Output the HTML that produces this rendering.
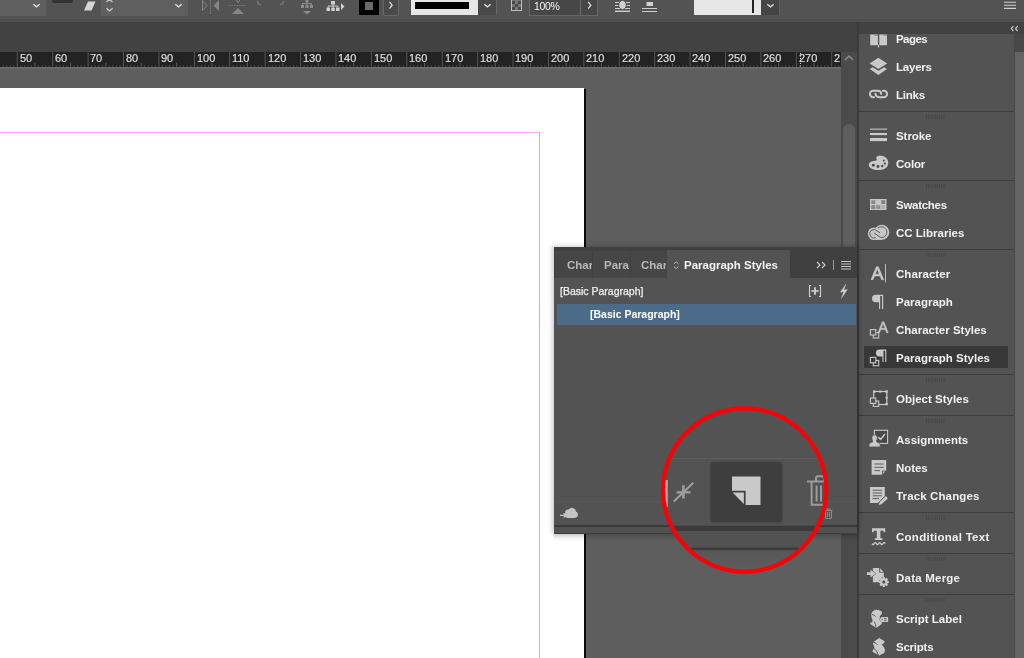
<!DOCTYPE html><html><head><meta charset="utf-8"><title>InDesign</title><style>
html,body{margin:0;padding:0;}
body{width:1024px;height:658px;overflow:hidden;background:#5e5e5e;position:relative;font-family:"Liberation Sans",sans-serif;}
.a{position:absolute;}
.lbl,.rt,.tx{will-change:transform;}
.lbl{position:absolute;left:896.3px;color:#f0f0f0;font-weight:700;font-size:11.5px;line-height:14px;white-space:nowrap;}
.rt{position:absolute;top:54px;color:#dedede;font-size:11px;line-height:9px;white-space:nowrap;letter-spacing:-0.05px;-webkit-text-stroke:0.2px #dedede}
svg{position:absolute;overflow:visible;}
</style></head><body>
<div class="a" style="left:0;top:88px;width:584px;height:570px;background:#fff"></div>
<div class="a" style="left:584px;top:89px;width:1.6px;height:569px;background:#0a0a0a"></div>
<div class="a" style="left:0;top:132px;width:540px;height:1.2px;background:#ffa6ff"></div>
<div class="a" style="left:538.6px;top:132px;width:1.4px;height:526px;background:#cfa0ff"></div>
<div class="a" style="left:0;top:0;width:1024px;height:22px;background:#535353"></div>
<div class="a" style="left:0;top:19px;width:1024px;height:3px;background:#4e4e4e"></div>
<div class="a" style="left:0;top:22px;width:859px;height:30px;background:#424242"></div>
<div class="a" style="left:0;top:0;width:46px;height:16px;background:#5f5f5f"></div>
<div class="a" style="left:101px;top:0;width:87px;height:16px;background:#5f5f5f"></div>
<div class="a" style="left:52px;top:0;width:21px;height:3px;background:#333;border-radius:0 0 2px 2px"></div>
<svg style="left:0;top:0" width="1" height="1"><path d="M33.3 4.2 L36.5 6.8 L39.7 4.2" fill="none" stroke="#e0e0e0" stroke-width="1.3"/></svg>
<svg style="left:0;top:0" width="1" height="1"><path d="M175.3 4.2 L178.5 6.8 L181.7 4.2" fill="none" stroke="#e0e0e0" stroke-width="1.3"/></svg>
<svg style="left:0;top:0" width="1" height="1"><path d="M106.3 8.2 L109.5 10.8 L112.7 8.2" fill="none" stroke="#c8c8c8" stroke-width="1.3"/></svg>
<svg style="left:0;top:0" width="1" height="1"><path d="M106.5 2 L109.5 -0.6 L112.5 2" fill="none" stroke="#c8c8c8" stroke-width="1.3"/></svg>
<svg style="left:0;top:0" width="1" height="1"><path d="M88 1.5 L95.5 1.5 L91.5 10.5 L84 10.5 Z" fill="#d6d6d6"/></svg>
<svg style="left:0;top:0" width="1" height="1"><path d="M202.5 0.5 L207 5.5 L202.5 10.5 Z" fill="none" stroke="#858585" stroke-width="1"/><path d="M219 0 L213.5 5.5 L219 11 Z" fill="#858585"/><path d="M210.5 0 V14" stroke="#7a7a7a" stroke-width="1" stroke-dasharray="1.5 1"/></svg>
<svg style="left:0;top:0" width="1" height="1"><path d="M229 5.5 H246" stroke="#7a7a7a" stroke-width="1" stroke-dasharray="1.5 1"/><path d="M238 8 L244 14 L232 14 Z" fill="#858585"/><path d="M235.5 -1 L238 2.5 L240.5 -1" fill="none" stroke="#858585" stroke-width="1"/></svg>
<svg style="left:0;top:0" width="1" height="1"><path d="M257.5 1 Q257.5 4.5 261 4.5" fill="none" stroke="#777" stroke-width="1.4"/><path d="M283.5 1 Q283.5 4.5 280 4.5" fill="none" stroke="#777" stroke-width="1.4"/></svg>
<svg style="left:0;top:0" width="1" height="1"><g fill="#8c8c8c"><rect x="305.5" y="0" width="3" height="2"/><rect x="301" y="5" width="3" height="3"/><rect x="305.5" y="5" width="3" height="3"/><rect x="310" y="5" width="3" height="3"/><path d="M303 11 L311 11 L307 14.5 Z"/></g><path d="M302.5 5 V3.5 H311.5 V5 M307 2 V5" fill="none" stroke="#8c8c8c" stroke-width="1"/></svg>
<svg style="left:0;top:0" width="1" height="1"><g fill="#cfcfcf"><rect x="331" y="1" width="4" height="3.5"/><rect x="326.5" y="7.5" width="3.5" height="3.5"/><rect x="331.3" y="7.5" width="3.5" height="3.5"/><rect x="336" y="7.5" width="3.5" height="3.5"/><path d="M341 3 L344.5 6.5 L341 10 Z"/></g><path d="M328.2 7.5 V6 H337.8 V7.5 M333 4.5 V7.5" fill="none" stroke="#cfcfcf" stroke-width="1"/></svg>
<div class="a" style="left:359px;top:0;width:20px;height:15px;background:#000"></div>
<div class="a" style="left:365px;top:2px;width:8px;height:8px;background:#6a6a6a"></div>
<div class="a" style="left:383px;top:-2px;width:16px;height:18px;border:1px solid #686868;background:#4a4a4a;box-sizing:border-box;border-radius:2px"></div>
<svg style="left:0;top:0" width="1" height="1"><path d="M389.5 1.8000000000000003 L392.1 5.2 L389.5 8.6" fill="none" stroke="#e0e0e0" stroke-width="1.3"/></svg>
<div class="a" style="left:411px;top:0;width:67px;height:15px;background:#e6e6e6"></div>
<div class="a" style="left:415px;top:2px;width:54px;height:7px;background:#000"></div>
<div class="a" style="left:478px;top:0;width:18px;height:15px;background:#484848;border-right:1px solid #666"></div>
<svg style="left:0;top:0" width="1" height="1"><path d="M484.3 4.2 L487.5 6.8 L490.7 4.2" fill="none" stroke="#e0e0e0" stroke-width="1.3"/></svg>
<svg style="left:0;top:0" width="1" height="1"><rect x="511.5" y="-1" width="10" height="11.5" fill="#777" stroke="#bdbdbd" stroke-width="1"/><g fill="#4a4a4a"><rect x="512" y="1" width="3" height="3"/><rect x="518" y="1" width="3" height="3"/><rect x="515" y="4" width="3" height="3"/><rect x="512" y="7" width="3" height="3"/><rect x="518" y="7" width="3" height="3"/></g></svg>
<div class="a" style="left:529px;top:-1px;width:69px;height:17px;border:1px solid #676767;background:#474747;box-sizing:border-box"></div>
<div class="a" style="left:580px;top:0;width:1px;height:15px;background:#6c6c6c"></div>
<div class="a tx" style="left:533.5px;top:1px;color:#f2f2f2;font-size:10.5px;line-height:11px;letter-spacing:-0.3px">100%</div>
<svg style="left:0;top:0" width="1" height="1"><path d="M588.2 1.8000000000000003 L590.8 5.2 L588.2 8.6" fill="none" stroke="#e0e0e0" stroke-width="1.3"/></svg>
<svg style="left:0;top:0" width="1" height="1"><g stroke="#cfcfcf" stroke-width="1"><path d="M615 2.5 H630 M615 5.5 H630 M615 8.5 H630"/><path d="M615 11.3 H630" stroke-width="1.4"/></g><ellipse cx="622.5" cy="5" rx="3.8" ry="4.6" fill="#cfcfcf" stroke="#535353" stroke-width="1"/></svg>
<svg style="left:0;top:0" width="1" height="1"><rect x="646.5" y="2" width="6.5" height="4" fill="#cfcfcf"/><path d="M642 8.5 H657 M642 11.5 H657" stroke="#cfcfcf" stroke-width="1.2"/></svg>
<div class="a" style="left:694px;top:0;width:67px;height:15px;background:#e6e6e6"></div>
<div class="a" style="left:752px;top:0;width:2px;height:13px;background:#222"></div>
<div class="a" style="left:761px;top:0;width:18px;height:15px;background:#454545;border-right:1px solid #5e5e5e"></div>
<svg style="left:0;top:0" width="1" height="1"><path d="M767.3 4.2 L770.5 6.8 L773.7 4.2" fill="none" stroke="#e0e0e0" stroke-width="1.3"/></svg>
<svg style="left:0;top:0" width="1" height="1"><path d="M1004 2.2 H1016 M1004 5.3 H1016 M1004 8.4 H1016" stroke="#d0d0d0" stroke-width="1.1"/></svg>
<div class="a" style="left:0;top:52px;width:841px;height:15px;background:#232323"></div>
<div class="a" style="left:0;top:67px;width:841px;height:1.5px;background:#696969"></div>
<svg style="left:0;top:0" width="1" height="1"><path d="M3.14 65.3 V67" stroke="#505050" stroke-width="1"/><path d="M6.68 65.3 V67" stroke="#505050" stroke-width="1"/><path d="M10.22 65.3 V67" stroke="#505050" stroke-width="1"/><path d="M13.76 65.3 V67" stroke="#505050" stroke-width="1"/><path d="M17.30 52 V67" stroke="#555" stroke-width="1"/><path d="M20.84 65.3 V67" stroke="#505050" stroke-width="1"/><path d="M24.38 65.3 V67" stroke="#505050" stroke-width="1"/><path d="M27.92 65.3 V67" stroke="#505050" stroke-width="1"/><path d="M31.46 65.3 V67" stroke="#505050" stroke-width="1"/><path d="M35.00 62.7 V67" stroke="#5c5c5c" stroke-width="1"/><path d="M38.55 65.3 V67" stroke="#505050" stroke-width="1"/><path d="M42.09 65.3 V67" stroke="#505050" stroke-width="1"/><path d="M45.63 65.3 V67" stroke="#505050" stroke-width="1"/><path d="M49.17 65.3 V67" stroke="#505050" stroke-width="1"/><path d="M52.71 52 V67" stroke="#555" stroke-width="1"/><path d="M56.25 65.3 V67" stroke="#505050" stroke-width="1"/><path d="M59.79 65.3 V67" stroke="#505050" stroke-width="1"/><path d="M63.33 65.3 V67" stroke="#505050" stroke-width="1"/><path d="M66.87 65.3 V67" stroke="#505050" stroke-width="1"/><path d="M70.41 62.7 V67" stroke="#5c5c5c" stroke-width="1"/><path d="M73.96 65.3 V67" stroke="#505050" stroke-width="1"/><path d="M77.50 65.3 V67" stroke="#505050" stroke-width="1"/><path d="M81.04 65.3 V67" stroke="#505050" stroke-width="1"/><path d="M84.58 65.3 V67" stroke="#505050" stroke-width="1"/><path d="M88.12 52 V67" stroke="#555" stroke-width="1"/><path d="M91.66 65.3 V67" stroke="#505050" stroke-width="1"/><path d="M95.20 65.3 V67" stroke="#505050" stroke-width="1"/><path d="M98.74 65.3 V67" stroke="#505050" stroke-width="1"/><path d="M102.28 65.3 V67" stroke="#505050" stroke-width="1"/><path d="M105.82 62.7 V67" stroke="#5c5c5c" stroke-width="1"/><path d="M109.37 65.3 V67" stroke="#505050" stroke-width="1"/><path d="M112.91 65.3 V67" stroke="#505050" stroke-width="1"/><path d="M116.45 65.3 V67" stroke="#505050" stroke-width="1"/><path d="M119.99 65.3 V67" stroke="#505050" stroke-width="1"/><path d="M123.53 52 V67" stroke="#555" stroke-width="1"/><path d="M127.07 65.3 V67" stroke="#505050" stroke-width="1"/><path d="M130.61 65.3 V67" stroke="#505050" stroke-width="1"/><path d="M134.15 65.3 V67" stroke="#505050" stroke-width="1"/><path d="M137.69 65.3 V67" stroke="#505050" stroke-width="1"/><path d="M141.23 62.7 V67" stroke="#5c5c5c" stroke-width="1"/><path d="M144.78 65.3 V67" stroke="#505050" stroke-width="1"/><path d="M148.32 65.3 V67" stroke="#505050" stroke-width="1"/><path d="M151.86 65.3 V67" stroke="#505050" stroke-width="1"/><path d="M155.40 65.3 V67" stroke="#505050" stroke-width="1"/><path d="M158.94 52 V67" stroke="#555" stroke-width="1"/><path d="M162.48 65.3 V67" stroke="#505050" stroke-width="1"/><path d="M166.02 65.3 V67" stroke="#505050" stroke-width="1"/><path d="M169.56 65.3 V67" stroke="#505050" stroke-width="1"/><path d="M173.10 65.3 V67" stroke="#505050" stroke-width="1"/><path d="M176.64 62.7 V67" stroke="#5c5c5c" stroke-width="1"/><path d="M180.19 65.3 V67" stroke="#505050" stroke-width="1"/><path d="M183.73 65.3 V67" stroke="#505050" stroke-width="1"/><path d="M187.27 65.3 V67" stroke="#505050" stroke-width="1"/><path d="M190.81 65.3 V67" stroke="#505050" stroke-width="1"/><path d="M194.35 52 V67" stroke="#555" stroke-width="1"/><path d="M197.89 65.3 V67" stroke="#505050" stroke-width="1"/><path d="M201.43 65.3 V67" stroke="#505050" stroke-width="1"/><path d="M204.97 65.3 V67" stroke="#505050" stroke-width="1"/><path d="M208.51 65.3 V67" stroke="#505050" stroke-width="1"/><path d="M212.05 62.7 V67" stroke="#5c5c5c" stroke-width="1"/><path d="M215.60 65.3 V67" stroke="#505050" stroke-width="1"/><path d="M219.14 65.3 V67" stroke="#505050" stroke-width="1"/><path d="M222.68 65.3 V67" stroke="#505050" stroke-width="1"/><path d="M226.22 65.3 V67" stroke="#505050" stroke-width="1"/><path d="M229.76 52 V67" stroke="#555" stroke-width="1"/><path d="M233.30 65.3 V67" stroke="#505050" stroke-width="1"/><path d="M236.84 65.3 V67" stroke="#505050" stroke-width="1"/><path d="M240.38 65.3 V67" stroke="#505050" stroke-width="1"/><path d="M243.92 65.3 V67" stroke="#505050" stroke-width="1"/><path d="M247.46 62.7 V67" stroke="#5c5c5c" stroke-width="1"/><path d="M251.01 65.3 V67" stroke="#505050" stroke-width="1"/><path d="M254.55 65.3 V67" stroke="#505050" stroke-width="1"/><path d="M258.09 65.3 V67" stroke="#505050" stroke-width="1"/><path d="M261.63 65.3 V67" stroke="#505050" stroke-width="1"/><path d="M265.17 52 V67" stroke="#555" stroke-width="1"/><path d="M268.71 65.3 V67" stroke="#505050" stroke-width="1"/><path d="M272.25 65.3 V67" stroke="#505050" stroke-width="1"/><path d="M275.79 65.3 V67" stroke="#505050" stroke-width="1"/><path d="M279.33 65.3 V67" stroke="#505050" stroke-width="1"/><path d="M282.87 62.7 V67" stroke="#5c5c5c" stroke-width="1"/><path d="M286.42 65.3 V67" stroke="#505050" stroke-width="1"/><path d="M289.96 65.3 V67" stroke="#505050" stroke-width="1"/><path d="M293.50 65.3 V67" stroke="#505050" stroke-width="1"/><path d="M297.04 65.3 V67" stroke="#505050" stroke-width="1"/><path d="M300.58 52 V67" stroke="#555" stroke-width="1"/><path d="M304.12 65.3 V67" stroke="#505050" stroke-width="1"/><path d="M307.66 65.3 V67" stroke="#505050" stroke-width="1"/><path d="M311.20 65.3 V67" stroke="#505050" stroke-width="1"/><path d="M314.74 65.3 V67" stroke="#505050" stroke-width="1"/><path d="M318.29 62.7 V67" stroke="#5c5c5c" stroke-width="1"/><path d="M321.83 65.3 V67" stroke="#505050" stroke-width="1"/><path d="M325.37 65.3 V67" stroke="#505050" stroke-width="1"/><path d="M328.91 65.3 V67" stroke="#505050" stroke-width="1"/><path d="M332.45 65.3 V67" stroke="#505050" stroke-width="1"/><path d="M335.99 52 V67" stroke="#555" stroke-width="1"/><path d="M339.53 65.3 V67" stroke="#505050" stroke-width="1"/><path d="M343.07 65.3 V67" stroke="#505050" stroke-width="1"/><path d="M346.61 65.3 V67" stroke="#505050" stroke-width="1"/><path d="M350.15 65.3 V67" stroke="#505050" stroke-width="1"/><path d="M353.69 62.7 V67" stroke="#5c5c5c" stroke-width="1"/><path d="M357.24 65.3 V67" stroke="#505050" stroke-width="1"/><path d="M360.78 65.3 V67" stroke="#505050" stroke-width="1"/><path d="M364.32 65.3 V67" stroke="#505050" stroke-width="1"/><path d="M367.86 65.3 V67" stroke="#505050" stroke-width="1"/><path d="M371.40 52 V67" stroke="#555" stroke-width="1"/><path d="M374.94 65.3 V67" stroke="#505050" stroke-width="1"/><path d="M378.48 65.3 V67" stroke="#505050" stroke-width="1"/><path d="M382.02 65.3 V67" stroke="#505050" stroke-width="1"/><path d="M385.56 65.3 V67" stroke="#505050" stroke-width="1"/><path d="M389.10 62.7 V67" stroke="#5c5c5c" stroke-width="1"/><path d="M392.65 65.3 V67" stroke="#505050" stroke-width="1"/><path d="M396.19 65.3 V67" stroke="#505050" stroke-width="1"/><path d="M399.73 65.3 V67" stroke="#505050" stroke-width="1"/><path d="M403.27 65.3 V67" stroke="#505050" stroke-width="1"/><path d="M406.81 52 V67" stroke="#555" stroke-width="1"/><path d="M410.35 65.3 V67" stroke="#505050" stroke-width="1"/><path d="M413.89 65.3 V67" stroke="#505050" stroke-width="1"/><path d="M417.43 65.3 V67" stroke="#505050" stroke-width="1"/><path d="M420.97 65.3 V67" stroke="#505050" stroke-width="1"/><path d="M424.51 62.7 V67" stroke="#5c5c5c" stroke-width="1"/><path d="M428.06 65.3 V67" stroke="#505050" stroke-width="1"/><path d="M431.60 65.3 V67" stroke="#505050" stroke-width="1"/><path d="M435.14 65.3 V67" stroke="#505050" stroke-width="1"/><path d="M438.68 65.3 V67" stroke="#505050" stroke-width="1"/><path d="M442.22 52 V67" stroke="#555" stroke-width="1"/><path d="M445.76 65.3 V67" stroke="#505050" stroke-width="1"/><path d="M449.30 65.3 V67" stroke="#505050" stroke-width="1"/><path d="M452.84 65.3 V67" stroke="#505050" stroke-width="1"/><path d="M456.38 65.3 V67" stroke="#505050" stroke-width="1"/><path d="M459.93 62.7 V67" stroke="#5c5c5c" stroke-width="1"/><path d="M463.47 65.3 V67" stroke="#505050" stroke-width="1"/><path d="M467.01 65.3 V67" stroke="#505050" stroke-width="1"/><path d="M470.55 65.3 V67" stroke="#505050" stroke-width="1"/><path d="M474.09 65.3 V67" stroke="#505050" stroke-width="1"/><path d="M477.63 52 V67" stroke="#555" stroke-width="1"/><path d="M481.17 65.3 V67" stroke="#505050" stroke-width="1"/><path d="M484.71 65.3 V67" stroke="#505050" stroke-width="1"/><path d="M488.25 65.3 V67" stroke="#505050" stroke-width="1"/><path d="M491.79 65.3 V67" stroke="#505050" stroke-width="1"/><path d="M495.33 62.7 V67" stroke="#5c5c5c" stroke-width="1"/><path d="M498.88 65.3 V67" stroke="#505050" stroke-width="1"/><path d="M502.42 65.3 V67" stroke="#505050" stroke-width="1"/><path d="M505.96 65.3 V67" stroke="#505050" stroke-width="1"/><path d="M509.50 65.3 V67" stroke="#505050" stroke-width="1"/><path d="M513.04 52 V67" stroke="#555" stroke-width="1"/><path d="M516.58 65.3 V67" stroke="#505050" stroke-width="1"/><path d="M520.12 65.3 V67" stroke="#505050" stroke-width="1"/><path d="M523.66 65.3 V67" stroke="#505050" stroke-width="1"/><path d="M527.20 65.3 V67" stroke="#505050" stroke-width="1"/><path d="M530.74 62.7 V67" stroke="#5c5c5c" stroke-width="1"/><path d="M534.29 65.3 V67" stroke="#505050" stroke-width="1"/><path d="M537.83 65.3 V67" stroke="#505050" stroke-width="1"/><path d="M541.37 65.3 V67" stroke="#505050" stroke-width="1"/><path d="M544.91 65.3 V67" stroke="#505050" stroke-width="1"/><path d="M548.45 52 V67" stroke="#555" stroke-width="1"/><path d="M551.99 65.3 V67" stroke="#505050" stroke-width="1"/><path d="M555.53 65.3 V67" stroke="#505050" stroke-width="1"/><path d="M559.07 65.3 V67" stroke="#505050" stroke-width="1"/><path d="M562.61 65.3 V67" stroke="#505050" stroke-width="1"/><path d="M566.15 62.7 V67" stroke="#5c5c5c" stroke-width="1"/><path d="M569.70 65.3 V67" stroke="#505050" stroke-width="1"/><path d="M573.24 65.3 V67" stroke="#505050" stroke-width="1"/><path d="M576.78 65.3 V67" stroke="#505050" stroke-width="1"/><path d="M580.32 65.3 V67" stroke="#505050" stroke-width="1"/><path d="M583.86 52 V67" stroke="#555" stroke-width="1"/><path d="M587.40 65.3 V67" stroke="#505050" stroke-width="1"/><path d="M590.94 65.3 V67" stroke="#505050" stroke-width="1"/><path d="M594.48 65.3 V67" stroke="#505050" stroke-width="1"/><path d="M598.02 65.3 V67" stroke="#505050" stroke-width="1"/><path d="M601.56 62.7 V67" stroke="#5c5c5c" stroke-width="1"/><path d="M605.11 65.3 V67" stroke="#505050" stroke-width="1"/><path d="M608.65 65.3 V67" stroke="#505050" stroke-width="1"/><path d="M612.19 65.3 V67" stroke="#505050" stroke-width="1"/><path d="M615.73 65.3 V67" stroke="#505050" stroke-width="1"/><path d="M619.27 52 V67" stroke="#555" stroke-width="1"/><path d="M622.81 65.3 V67" stroke="#505050" stroke-width="1"/><path d="M626.35 65.3 V67" stroke="#505050" stroke-width="1"/><path d="M629.89 65.3 V67" stroke="#505050" stroke-width="1"/><path d="M633.43 65.3 V67" stroke="#505050" stroke-width="1"/><path d="M636.97 62.7 V67" stroke="#5c5c5c" stroke-width="1"/><path d="M640.52 65.3 V67" stroke="#505050" stroke-width="1"/><path d="M644.06 65.3 V67" stroke="#505050" stroke-width="1"/><path d="M647.60 65.3 V67" stroke="#505050" stroke-width="1"/><path d="M651.14 65.3 V67" stroke="#505050" stroke-width="1"/><path d="M654.68 52 V67" stroke="#555" stroke-width="1"/><path d="M658.22 65.3 V67" stroke="#505050" stroke-width="1"/><path d="M661.76 65.3 V67" stroke="#505050" stroke-width="1"/><path d="M665.30 65.3 V67" stroke="#505050" stroke-width="1"/><path d="M668.84 65.3 V67" stroke="#505050" stroke-width="1"/><path d="M672.38 62.7 V67" stroke="#5c5c5c" stroke-width="1"/><path d="M675.93 65.3 V67" stroke="#505050" stroke-width="1"/><path d="M679.47 65.3 V67" stroke="#505050" stroke-width="1"/><path d="M683.01 65.3 V67" stroke="#505050" stroke-width="1"/><path d="M686.55 65.3 V67" stroke="#505050" stroke-width="1"/><path d="M690.09 52 V67" stroke="#555" stroke-width="1"/><path d="M693.63 65.3 V67" stroke="#505050" stroke-width="1"/><path d="M697.17 65.3 V67" stroke="#505050" stroke-width="1"/><path d="M700.71 65.3 V67" stroke="#505050" stroke-width="1"/><path d="M704.25 65.3 V67" stroke="#505050" stroke-width="1"/><path d="M707.79 62.7 V67" stroke="#5c5c5c" stroke-width="1"/><path d="M711.34 65.3 V67" stroke="#505050" stroke-width="1"/><path d="M714.88 65.3 V67" stroke="#505050" stroke-width="1"/><path d="M718.42 65.3 V67" stroke="#505050" stroke-width="1"/><path d="M721.96 65.3 V67" stroke="#505050" stroke-width="1"/><path d="M725.50 52 V67" stroke="#555" stroke-width="1"/><path d="M729.04 65.3 V67" stroke="#505050" stroke-width="1"/><path d="M732.58 65.3 V67" stroke="#505050" stroke-width="1"/><path d="M736.12 65.3 V67" stroke="#505050" stroke-width="1"/><path d="M739.66 65.3 V67" stroke="#505050" stroke-width="1"/><path d="M743.20 62.7 V67" stroke="#5c5c5c" stroke-width="1"/><path d="M746.75 65.3 V67" stroke="#505050" stroke-width="1"/><path d="M750.29 65.3 V67" stroke="#505050" stroke-width="1"/><path d="M753.83 65.3 V67" stroke="#505050" stroke-width="1"/><path d="M757.37 65.3 V67" stroke="#505050" stroke-width="1"/><path d="M760.91 52 V67" stroke="#555" stroke-width="1"/><path d="M764.45 65.3 V67" stroke="#505050" stroke-width="1"/><path d="M767.99 65.3 V67" stroke="#505050" stroke-width="1"/><path d="M771.53 65.3 V67" stroke="#505050" stroke-width="1"/><path d="M775.07 65.3 V67" stroke="#505050" stroke-width="1"/><path d="M778.61 62.7 V67" stroke="#5c5c5c" stroke-width="1"/><path d="M782.16 65.3 V67" stroke="#505050" stroke-width="1"/><path d="M785.70 65.3 V67" stroke="#505050" stroke-width="1"/><path d="M789.24 65.3 V67" stroke="#505050" stroke-width="1"/><path d="M792.78 65.3 V67" stroke="#505050" stroke-width="1"/><path d="M796.32 52 V67" stroke="#555" stroke-width="1"/><path d="M799.86 65.3 V67" stroke="#505050" stroke-width="1"/><path d="M803.40 65.3 V67" stroke="#505050" stroke-width="1"/><path d="M806.94 65.3 V67" stroke="#505050" stroke-width="1"/><path d="M810.48 65.3 V67" stroke="#505050" stroke-width="1"/><path d="M814.02 62.7 V67" stroke="#5c5c5c" stroke-width="1"/><path d="M817.57 65.3 V67" stroke="#505050" stroke-width="1"/><path d="M821.11 65.3 V67" stroke="#505050" stroke-width="1"/><path d="M824.65 65.3 V67" stroke="#505050" stroke-width="1"/><path d="M828.19 65.3 V67" stroke="#505050" stroke-width="1"/><path d="M831.73 52 V67" stroke="#555" stroke-width="1"/><path d="M835.27 65.3 V67" stroke="#505050" stroke-width="1"/><path d="M838.81 65.3 V67" stroke="#505050" stroke-width="1"/></svg>
<div class="rt" style="left:19.6px">50</div>
<div class="rt" style="left:55.0px">60</div>
<div class="rt" style="left:90.4px">70</div>
<div class="rt" style="left:125.8px">80</div>
<div class="rt" style="left:161.2px">90</div>
<div class="rt" style="left:196.7px">100</div>
<div class="rt" style="left:232.1px">110</div>
<div class="rt" style="left:267.5px">120</div>
<div class="rt" style="left:302.9px">130</div>
<div class="rt" style="left:338.3px">140</div>
<div class="rt" style="left:373.7px">150</div>
<div class="rt" style="left:409.1px">160</div>
<div class="rt" style="left:444.5px">170</div>
<div class="rt" style="left:479.9px">180</div>
<div class="rt" style="left:515.3px">190</div>
<div class="rt" style="left:550.7px">200</div>
<div class="rt" style="left:586.2px">210</div>
<div class="rt" style="left:621.6px">220</div>
<div class="rt" style="left:657.0px">230</div>
<div class="rt" style="left:692.4px">240</div>
<div class="rt" style="left:727.8px">250</div>
<div class="rt" style="left:763.2px">260</div>
<div class="rt" style="left:798.6px">270</div>
<div class="rt" style="left:834.0px">2</div>
<svg style="left:0;top:0" width="1" height="1"><path d="M800.5 53 V67" stroke="#e0e0e0" stroke-width="1" stroke-dasharray="1 1.5"/></svg>
<div class="a" style="left:841px;top:52px;width:16px;height:606px;background:#4b4b4b"></div>
<div class="a" style="left:842.5px;top:123.5px;width:12.8px;height:300px;background:#5f5f5f;border-radius:6.4px"></div>
<svg style="left:0;top:0" width="1" height="1"><path d="M845 60 L849 56 L853 60" fill="none" stroke="#8a8a8a" stroke-width="1.5"/></svg>
<div class="a" style="left:857px;top:22px;width:2px;height:636px;background:#3b3b3b"></div>
<div class="a" style="left:859px;top:22px;width:165px;height:12px;background:#424242"></div>
<div class="a" style="left:859px;top:34px;width:155px;height:624px;background:#535353"></div>
<div class="a" style="left:1014px;top:34px;width:10px;height:624px;background:#484848"></div>
<div class="a" style="left:1015px;top:52px;width:9px;height:606px;background:#646464"></div>
<svg style="left:0;top:0" width="1" height="1"><path d="M1013.4 26.2 L1011.4 28.6 L1013.4 31 M1017.6 26.2 L1015.6 28.6 L1017.6 31" fill="none" stroke="#c4c4c4" stroke-width="1.3"/></svg>
<div class="a" style="left:859px;top:111px;width:155px;height:1px;background:#3e3e3e"></div>
<svg style="left:0;top:0" width="1" height="1"><rect x="926.0" y="115" width="0.9" height="4" fill="#464646"/><rect x="928.2" y="115" width="0.9" height="4" fill="#464646"/><rect x="930.4" y="115" width="0.9" height="4" fill="#464646"/><rect x="932.6" y="115" width="0.9" height="4" fill="#464646"/><rect x="934.8" y="115" width="0.9" height="4" fill="#464646"/><rect x="937.0" y="115" width="0.9" height="4" fill="#464646"/><rect x="939.2" y="115" width="0.9" height="4" fill="#464646"/><rect x="941.4" y="115" width="0.9" height="4" fill="#464646"/><rect x="943.6" y="115" width="0.9" height="4" fill="#464646"/></svg>
<div class="a" style="left:859px;top:180px;width:155px;height:1px;background:#3e3e3e"></div>
<svg style="left:0;top:0" width="1" height="1"><rect x="926.0" y="184" width="0.9" height="4" fill="#464646"/><rect x="928.2" y="184" width="0.9" height="4" fill="#464646"/><rect x="930.4" y="184" width="0.9" height="4" fill="#464646"/><rect x="932.6" y="184" width="0.9" height="4" fill="#464646"/><rect x="934.8" y="184" width="0.9" height="4" fill="#464646"/><rect x="937.0" y="184" width="0.9" height="4" fill="#464646"/><rect x="939.2" y="184" width="0.9" height="4" fill="#464646"/><rect x="941.4" y="184" width="0.9" height="4" fill="#464646"/><rect x="943.6" y="184" width="0.9" height="4" fill="#464646"/></svg>
<div class="a" style="left:859px;top:249px;width:155px;height:1px;background:#3e3e3e"></div>
<svg style="left:0;top:0" width="1" height="1"><rect x="926.0" y="253" width="0.9" height="4" fill="#464646"/><rect x="928.2" y="253" width="0.9" height="4" fill="#464646"/><rect x="930.4" y="253" width="0.9" height="4" fill="#464646"/><rect x="932.6" y="253" width="0.9" height="4" fill="#464646"/><rect x="934.8" y="253" width="0.9" height="4" fill="#464646"/><rect x="937.0" y="253" width="0.9" height="4" fill="#464646"/><rect x="939.2" y="253" width="0.9" height="4" fill="#464646"/><rect x="941.4" y="253" width="0.9" height="4" fill="#464646"/><rect x="943.6" y="253" width="0.9" height="4" fill="#464646"/></svg>
<div class="a" style="left:859px;top:374px;width:155px;height:1px;background:#3e3e3e"></div>
<svg style="left:0;top:0" width="1" height="1"><rect x="926.0" y="378" width="0.9" height="4" fill="#464646"/><rect x="928.2" y="378" width="0.9" height="4" fill="#464646"/><rect x="930.4" y="378" width="0.9" height="4" fill="#464646"/><rect x="932.6" y="378" width="0.9" height="4" fill="#464646"/><rect x="934.8" y="378" width="0.9" height="4" fill="#464646"/><rect x="937.0" y="378" width="0.9" height="4" fill="#464646"/><rect x="939.2" y="378" width="0.9" height="4" fill="#464646"/><rect x="941.4" y="378" width="0.9" height="4" fill="#464646"/><rect x="943.6" y="378" width="0.9" height="4" fill="#464646"/></svg>
<div class="a" style="left:859px;top:415px;width:155px;height:1px;background:#3e3e3e"></div>
<svg style="left:0;top:0" width="1" height="1"><rect x="926.0" y="419" width="0.9" height="4" fill="#464646"/><rect x="928.2" y="419" width="0.9" height="4" fill="#464646"/><rect x="930.4" y="419" width="0.9" height="4" fill="#464646"/><rect x="932.6" y="419" width="0.9" height="4" fill="#464646"/><rect x="934.8" y="419" width="0.9" height="4" fill="#464646"/><rect x="937.0" y="419" width="0.9" height="4" fill="#464646"/><rect x="939.2" y="419" width="0.9" height="4" fill="#464646"/><rect x="941.4" y="419" width="0.9" height="4" fill="#464646"/><rect x="943.6" y="419" width="0.9" height="4" fill="#464646"/></svg>
<div class="a" style="left:859px;top:512px;width:155px;height:1px;background:#3e3e3e"></div>
<svg style="left:0;top:0" width="1" height="1"><rect x="926.0" y="516" width="0.9" height="4" fill="#464646"/><rect x="928.2" y="516" width="0.9" height="4" fill="#464646"/><rect x="930.4" y="516" width="0.9" height="4" fill="#464646"/><rect x="932.6" y="516" width="0.9" height="4" fill="#464646"/><rect x="934.8" y="516" width="0.9" height="4" fill="#464646"/><rect x="937.0" y="516" width="0.9" height="4" fill="#464646"/><rect x="939.2" y="516" width="0.9" height="4" fill="#464646"/><rect x="941.4" y="516" width="0.9" height="4" fill="#464646"/><rect x="943.6" y="516" width="0.9" height="4" fill="#464646"/></svg>
<div class="a" style="left:859px;top:553px;width:155px;height:1px;background:#3e3e3e"></div>
<svg style="left:0;top:0" width="1" height="1"><rect x="926.0" y="557" width="0.9" height="4" fill="#464646"/><rect x="928.2" y="557" width="0.9" height="4" fill="#464646"/><rect x="930.4" y="557" width="0.9" height="4" fill="#464646"/><rect x="932.6" y="557" width="0.9" height="4" fill="#464646"/><rect x="934.8" y="557" width="0.9" height="4" fill="#464646"/><rect x="937.0" y="557" width="0.9" height="4" fill="#464646"/><rect x="939.2" y="557" width="0.9" height="4" fill="#464646"/><rect x="941.4" y="557" width="0.9" height="4" fill="#464646"/><rect x="943.6" y="557" width="0.9" height="4" fill="#464646"/></svg>
<div class="a" style="left:859px;top:594px;width:155px;height:1px;background:#3e3e3e"></div>
<svg style="left:0;top:0" width="1" height="1"><rect x="926.0" y="598" width="0.9" height="4" fill="#464646"/><rect x="928.2" y="598" width="0.9" height="4" fill="#464646"/><rect x="930.4" y="598" width="0.9" height="4" fill="#464646"/><rect x="932.6" y="598" width="0.9" height="4" fill="#464646"/><rect x="934.8" y="598" width="0.9" height="4" fill="#464646"/><rect x="937.0" y="598" width="0.9" height="4" fill="#464646"/><rect x="939.2" y="598" width="0.9" height="4" fill="#464646"/><rect x="941.4" y="598" width="0.9" height="4" fill="#464646"/><rect x="943.6" y="598" width="0.9" height="4" fill="#464646"/></svg>
<div class="a" style="left:864px;top:346px;width:144px;height:22px;background:#383838"></div>
<div class="lbl" style="top:32px;letter-spacing:-0.57px">Pages</div>
<div class="lbl" style="top:60px;letter-spacing:-0.22px">Layers</div>
<div class="lbl" style="top:88px;letter-spacing:-0.21px">Links</div>
<div class="lbl" style="top:129px;letter-spacing:-0.06px">Stroke</div>
<div class="lbl" style="top:157px;letter-spacing:-0.21px">Color</div>
<div class="lbl" style="top:198px;letter-spacing:-0.29px">Swatches</div>
<div class="lbl" style="top:226px;letter-spacing:0px">CC Libraries</div>
<div class="lbl" style="top:267px;letter-spacing:0.06px">Character</div>
<div class="lbl" style="top:295px;letter-spacing:0px">Paragraph</div>
<div class="lbl" style="top:323px;letter-spacing:0px">Character Styles</div>
<div class="lbl" style="top:351px;letter-spacing:0px">Paragraph Styles</div>
<div class="lbl" style="top:392px;letter-spacing:0px">Object Styles</div>
<div class="lbl" style="top:433px;letter-spacing:0px">Assignments</div>
<div class="lbl" style="top:461px;letter-spacing:-0.09px">Notes</div>
<div class="lbl" style="top:489px;letter-spacing:0.13px">Track Changes</div>
<div class="lbl" style="top:530px;letter-spacing:0.27px">Conditional Text</div>
<div class="lbl" style="top:571px;letter-spacing:0.22px">Data Merge</div>
<div class="lbl" style="top:612px;letter-spacing:0px">Script Label</div>
<div class="lbl" style="top:640px;letter-spacing:-0.23px">Scripts</div>
<div class="a" style="left:859px;top:22px;width:165px;height:12px;background:#424242"></div>
<svg style="left:0;top:0" width="1" height="1"><path d="M1013.4 26.2 L1011.4 28.6 L1013.4 31 M1017.6 26.2 L1015.6 28.6 L1017.6 31" fill="none" stroke="#c4c4c4" stroke-width="1.3"/></svg>
<svg style="left:0;top:0" width="1024" height="658">
<g fill="#c9c9c9" stroke="none">
<!-- Pages -->
<path d="M870.2 34.6 H877.9 V45.3 H870.2 Z M879.3 34.6 H887 V45.3 H879.3 Z"/>
<rect x="878.15" y="44.8" width="0.9" height="2.9" fill="#d8d8d8"/>
<rect x="874.6" y="34" width="3.3" height="1.8" fill="#8a8a8a"/><rect x="883.7" y="34" width="3.3" height="1.8" fill="#8a8a8a"/>
<!-- Layers -->
<path d="M878.4 57.8 L887.2 63.4 L878.4 69 L869.6 63.4 Z"/>
<path d="M869.8 69 L872.7 67.2 L878.4 70.8 L884.1 67.2 L887 69 L878.4 75 Z"/>
</g>
<!-- Links -->
<g fill="none" stroke="#cbcbcb" stroke-width="1.9" stroke-linecap="round">
<path d="M874 97.2 H873.1 A3.2 3.2 0 0 1 873.1 90.8 H877.6 Q881 90.9 881.2 94"/>
<path d="M882.8 90.8 H883.9 A3.2 3.2 0 0 1 883.9 97.2 H879.2 Q875.7 97.1 875.4 93.7"/>
</g>
<!-- Stroke -->
<g fill="#c9c9c9">
<rect x="870" y="128.6" width="17" height="1.1"/>
<rect x="870" y="133" width="17" height="2.1"/>
<rect x="870" y="138" width="17" height="3.1"/>
</g>
<!-- Color palette -->
<path d="M876.3 157 C878 155.3 883 155.1 886 157.7 C888.9 160.3 888.9 165 886.4 167.5 C883.6 170.2 877.5 170.5 873.5 169.5 C870.6 168.7 868.5 166.9 868.8 164.6 C869 162.2 871.4 160.9 874 160.9 C876 160.9 877.1 160.4 876.7 159 C876.4 158 876 157.6 876.3 157 Z" fill="#c9c9c9"/>
<g fill="#4a4a4a">
<circle cx="873.3" cy="165.3" r="1.45"/><circle cx="878" cy="166.5" r="1.45"/><circle cx="882.2" cy="166" r="1.2"/><circle cx="884.9" cy="163.6" r="1.1"/><circle cx="883.8" cy="160.5" r="1"/>
</g>
<!-- Swatches -->
<rect x="870" y="199" width="16.5" height="11" fill="#c6c6c6"/>
<g>
<rect x="871.3" y="200.2" width="4" height="3.8" fill="#8a8a8a"/>
<rect x="881.2" y="200.2" width="4" height="3.8" fill="#808080"/>
<rect x="871.3" y="205.2" width="4" height="3.8" fill="#888"/>
<rect x="876.2" y="205.2" width="4" height="3.8" fill="#909090"/>
<rect x="881.2" y="205.2" width="4" height="3.8" fill="#b0b0b0"/>
</g>
<!-- CC Libraries -->
<g fill="#c6c6c6"><circle cx="874.1" cy="233.7" r="6.3"/><circle cx="881.85" cy="232.2" r="7.45"/><rect x="874" y="235" width="8" height="4.9"/></g>
<g fill="none" stroke="#565656" stroke-width="0.95" stroke-linecap="round">
<path d="M875.4 237.8 A4.25 4.25 0 1 1 877.2 230.9 L879.7 232.6"/>
<path d="M878.2 227.8 A5.4 5.4 0 1 1 880.4 237.4 L874.4 233.2"/>
</g>
<!-- Character A| -->
<path d="M871 279.7 L876.4 266.7 H878.3 L883.7 279.7 H881.6 L880.1 275.9 H874.5 L873 279.7 Z M875.2 274.2 H879.4 L877.3 268.8 Z" fill="#c9c9c9" stroke="#c9c9c9" stroke-width="0.6"/>
<rect x="885" y="264" width="1" height="18.3" fill="#bcbcbc"/>
<!-- Paragraph pilcrow -->
<path d="M875.8 294.8 H883.2 V309 H882 V296 H880.2 V309 H879 V302.3 H875.8 A3.75 3.75 0 0 1 875.8 294.8 Z" fill="#c9c9c9"/>
<!-- Character Styles -->
<path d="M878 332.7 L882.4 321.7 H883.8 L888.2 332.7 H886.7 L885.5 329.6 H880.7 L879.5 332.7 Z M881.2 328.3 H885 L883.1 323.3 Z" fill="#c9c9c9" stroke="#c9c9c9" stroke-width="0.55"/>
<g fill="#535353" stroke="#c9c9c9" stroke-width="1.1">
<rect x="873.3" y="332.6" width="5.4" height="5.4"/>
<rect x="870.4" y="329.6" width="5.4" height="5.4"/>
</g>
<!-- Paragraph Styles -->
<path d="M879.4 349.5 H886.3 V362 H885.2 V350.7 H883.5 V362 H882.4 V356.4 H879.4 A3.45 3.45 0 0 1 879.4 349.5 Z" fill="#c9c9c9"/>
<g fill="#383838" stroke="#c9c9c9" stroke-width="1.1">
<rect x="873.3" y="360.4" width="5.4" height="5.4"/>
<rect x="870.4" y="357.4" width="5.4" height="5.4"/>
</g>
<!-- Object Styles -->
<rect x="873.7" y="391.5" width="13.1" height="13" fill="#464646" stroke="#c9c9c9" stroke-width="1.2"/>
<g fill="#c9c9c9"><rect x="873" y="390.4" width="2.4" height="2.4"/><rect x="885.4" y="390.4" width="2.4" height="2.4"/><rect x="885.4" y="402.8" width="2.4" height="2.4"/><rect x="879.2" y="390.6" width="2.2" height="2"/><rect x="885.6" y="396.6" width="2" height="2.2"/></g>
<g fill="#535353" stroke="#c9c9c9" stroke-width="1.1">
<rect x="873.3" y="401" width="5.4" height="5.4"/>
<rect x="870.4" y="398" width="5.4" height="5.4"/>
</g>
<!-- Assignments -->
<rect x="874.4" y="430.3" width="13.2" height="13.1" fill="#484848" stroke="#c9c9c9" stroke-width="1.1"/>
<path d="M878.3 437.2 L880.5 439.4 L885 434.1" fill="none" stroke="#cdcdcd" stroke-width="1.5"/>
<path d="M869.1 446.9 V444.6 Q869.1 442.8 872.6 442 V440.6 Q871.9 439.6 871.9 437.6 Q871.9 434.8 874.6 434.8 Q877.3 434.8 877.3 437.6 Q877.3 439.6 876.6 440.6 V442 Q880.1 442.8 880.1 444.6 V446.9 Z" fill="#c9c9c9" stroke="#535353" stroke-width="0.7"/>
<!-- Notes -->
<path d="M871.6 460 H886.2 V470.6 L882 474.8 H871.6 Z" fill="#c9c9c9"/>
<path d="M882.4 474.6 V471 H886" fill="none" stroke="#535353" stroke-width="0.9"/>
<path d="M874.4 464 H883.6 M874.4 467.3 H883.6 M874.4 470.6 H880" stroke="#5a5a5a" stroke-width="1"/>
<!-- Track Changes -->
<path d="M870 487 H884.8 V496 L878 503 H870 Z" fill="#c9c9c9"/>
<path d="M872.6 490.2 H882 M872.6 493 H882 M872.6 495.8 H882 M872.6 498.6 H879" stroke="#5a5a5a" stroke-width="1"/>
<path d="M878.2 505.6 L879.2 502 L885.8 495.6 L888.4 498.2 L881.8 504.6 Z" fill="#c9c9c9" stroke="#535353" stroke-width="0.8"/>
<!-- Conditional Text -->
<path d="M872 528.3 H885.2 V532.3 H883.6 V530.7 H880.4 V538.2 H882.5 V539.9 H874.7 V538.2 H876.8 V530.7 H873.6 V532.3 H872 Z" fill="#c9c9c9"/>
<path d="M872 543.6 Q873.1 545.6 874.2 543.6 T876.4 543.6 T878.6 543.6 T880.8 543.6 T883 543.6 T885.2 543.6" fill="none" stroke="#c9c9c9" stroke-width="1.3"/>
<!-- Data Merge -->
<path d="M872.9 568 H879.7 L883.8 572 V582.2 H872.9 Z" fill="#c9c9c9"/>
<path d="M879.6 567.6 V572.2 H884.2" fill="none" stroke="#535353" stroke-width="0.9"/>
<path d="M866.9 572.3 H870.5 V569.8 L876 573.6 L870.5 577.4 V574.9 H866.9 Z" fill="#c9c9c9" stroke="#535353" stroke-width="1" paint-order="stroke"/>
<g transform="translate(883.8 582)">
<circle r="4.7" fill="#535353"/>
<circle r="3.8" fill="#c9c9c9"/>
<g fill="#c9c9c9"><rect x="-1.1" y="-5" width="2.2" height="10"/><rect x="-1.1" y="-5" width="2.2" height="10" transform="rotate(45)"/><rect x="-1.1" y="-5" width="2.2" height="10" transform="rotate(90)"/><rect x="-1.1" y="-5" width="2.2" height="10" transform="rotate(135)"/></g>
<circle r="1.55" fill="#484848"/>
</g>
<!-- Script Label -->
<path d="M875.9 609.8 Q879.6 609.6 881.6 611.6 Q882.8 613.4 881.2 614.8 L879.8 616 Q879.4 617.8 880.6 619.4 Q883 622.4 881.4 624.2 L876.3 628.1 L869.9 623.8 Q870.4 622.4 872.2 622 Q873 619.6 871.4 617 Q870.6 614 872.2 612 Q873.6 610.2 875.9 609.8 Z" fill="#c9c9c9"/>
<path d="M872 614.4 Q874.4 614.8 875.6 616.6 M874.2 621.6 Q876 623.6 875.9 627.6" fill="none" stroke="#4e4e4e" stroke-width="0.9"/>
<path d="M881.4 616.9 H888.1 V622 H881.4 L879.6 619.45 Z" fill="#c9c9c9" stroke="#535353" stroke-width="0.8" paint-order="stroke"/>
<path d="M884 618.5 H886.6 M884 620.4 H886.6" stroke="#555" stroke-width="0.9"/><circle cx="882.1" cy="619.45" r="0.6" fill="#555"/>
<!-- Scripts -->
<path d="M879.2 637.9 L884.6 641.3 Q884.8 642.6 883.4 643.4 L881.8 644.4 Q885 647.6 884.9 650.6 Q884.8 652.4 884.2 653 L879.4 655.4 L872.5 651.8 Q872.6 650 874 648.8 Q875.2 647 873.4 645 Q872.2 643 874.2 641.4 Z" fill="#c9c9c9"/>
<path d="M873.2 642.2 Q876 642.6 877.4 644.8 M873.9 648.6 Q877.6 650.6 878.2 655" fill="none" stroke="#4e4e4e" stroke-width="0.9"/>
</svg>

<div class="a" style="left:552px;top:246px;width:307px;height:288px;background:rgba(0,0,0,0.2);filter:blur(2px)"></div>
<div class="a" style="left:554px;top:247px;width:303px;height:286px;background:#535353"></div>
<div class="a" style="left:554px;top:247px;width:303px;height:30.6px;background:#404040"></div>
<div class="a" style="left:555px;top:251px;width:37px;height:27px;background:#464646"></div>
<div class="a" style="left:593px;top:251px;width:37px;height:27px;background:#464646"></div>
<div class="a" style="left:631px;top:251px;width:36px;height:27px;background:#464646"></div>
<div class="a" style="left:667px;top:250px;width:123px;height:29px;background:#535353"></div>
<div class="a tx" style="left:567px;top:258px;width:25px;color:#b8b8b8;font-weight:700;font-size:11.5px;line-height:14px;white-space:nowrap;overflow:hidden">Char</div>
<div class="a tx" style="left:604px;top:258px;width:26px;color:#b8b8b8;font-weight:700;font-size:11.5px;line-height:14px;white-space:nowrap;overflow:hidden">Para</div>
<div class="a tx" style="left:641px;top:258px;width:25px;color:#b8b8b8;font-weight:700;font-size:11.5px;line-height:14px;white-space:nowrap;overflow:hidden">Char</div>
<div class="a tx" style="left:684px;top:258px;color:#b8b8b8;font-weight:700;font-size:11.5px;line-height:14px;white-space:nowrap;overflow:hidden;color:#f2f2f2">Paragraph Styles</div>
<svg style="left:0;top:0" width="1" height="1"><path d="M674 263.8 L676.2 261.8 L678.4 263.8 M674 266.6 L676.2 268.6 L678.4 266.6" fill="none" stroke="#c0c0c0" stroke-width="0.9"/></svg>
<svg style="left:0;top:0" width="1" height="1"><path d="M817 262 L820 265 L817 268 M822 262 L825 265 L822 268" fill="none" stroke="#d0d0d0" stroke-width="1.1"/><path d="M833.5 260 V270" stroke="#9a9a9a" stroke-width="1"/><path d="M841 261.5 H851 M841 264 H851 M841 266.5 H851 M841 269 H851" stroke="#c8c8c8" stroke-width="1"/></svg>
<div class="a tx" style="left:560px;top:285px;color:#f0f0f0;font-size:10.5px;line-height:13px;white-space:nowrap;letter-spacing:0px;-webkit-text-stroke:0.25px #f0f0f0">[Basic Paragraph]</div>
<svg style="left:0;top:0" width="1" height="1"><path d="M811 285.5 H809.5 V296.5 H811 M819 285.5 H820.5 V296.5 H819 " fill="none" stroke="#d0d0d0" stroke-width="1.1"/><path d="M815 287.3 V294.7 M811.3 291 H818.7" fill="none" stroke="#d8d8d8" stroke-width="1.7"/><path d="M846 284 L840.3 292.2 L843.8 291.6 L841.3 298.4 L847.4 289.4 L843.8 290 Z" fill="#d4d4d4" stroke="#d4d4d4" stroke-width="0.3"/></svg>
<div class="a" style="left:556.5px;top:303.8px;width:299.5px;height:21px;background:#4b6b89"></div>
<div class="a tx" style="left:590px;top:308px;color:#fff;font-size:10.5px;font-weight:700;line-height:13px;white-space:nowrap;letter-spacing:0px">[Basic Paragraph]</div>
<div class="a" style="left:555px;top:500.5px;width:301px;height:1px;background:#595959"></div>
<div class="a" style="left:554px;top:534px;width:303px;height:7px;background:linear-gradient(rgba(0,0,0,0.13),rgba(0,0,0,0))"></div>
<div class="a" style="left:554px;top:524.9px;width:303px;height:1.9px;background:#3a3a3a"></div>
<div class="a" style="left:554px;top:526.8px;width:303px;height:6px;background:#515151"></div>
<div class="a" style="left:554px;top:532.8px;width:303px;height:1.3px;background:#3e3e3e"></div>
<svg style="left:0;top:0" width="1" height="1"><path d="M567.6 518 h7.2 a3.4 3.4 0 0 0 1.2 -6.5 a4 4 0 0 0 -7.3 -2 a3.1 3.1 0 0 0 -3.6 3.4 a2.5 2.5 0 0 0 1 4.6 Z" fill="#c4c4c4"/><path d="M560 515.4 H566 M563.6 513.4 L565.8 515.4 L563.6 517.4" fill="none" stroke="#c4c4c4" stroke-width="1.2"/></svg>
<svg style="left:0;top:0" width="1" height="1"><path d="M824.5 510.5 H832.5 M825.5 510.5 V518.5 H831.5 V510.5 M827.5 512 V517 M829.5 512 V517 M827 510 V509 H830 V510" fill="none" stroke="#8a8a8a" stroke-width="1"/></svg>
<svg style="left:0;top:0" width="1024" height="658"><defs><clipPath id="mc"><circle cx="744.6" cy="490" r="81.7"/></clipPath><linearGradient id="gg" x1="0" y1="0" x2="0" y2="1"><stop offset="0" stop-color="#585858"/><stop offset="1" stop-color="#606060"/></linearGradient></defs><g clip-path="url(#mc)"><rect x="650" y="400" width="200" height="126" fill="#535353"/><rect x="650" y="458" width="200" height="1" fill="#5d5d5d"/><rect x="650" y="525.8" width="200" height="5.2" fill="#3a3a3a"/><rect x="650" y="531" width="200" height="17" fill="#525252"/><rect x="650" y="547.7" width="200" height="2.8" fill="#3b3b3b"/><rect x="650" y="550.5" width="200" height="30" fill="url(#gg)"/><rect x="710.1" y="461.8" width="72.6" height="61" rx="3.6" fill="#3e3e3e" stroke="#4d4d4d" stroke-width="0.9"/><path d="M732 476.4 H760.5 V504.9 H745.6 V490.7 H732 Z" fill="#c9c9c9"/><path d="M732.6 492.6 H743.9 V503.9 Z" fill="#c9c9c9"/><rect x="665.2" y="480" width="2.6" height="27" fill="#a9a9a9"/><path d="M674.3 501 L692.8 483.2" stroke="#9e9e9e" stroke-width="2" fill="none" stroke-linecap="round"/><path d="M683.4 485.2 V498.6" stroke="#9e9e9e" stroke-width="2.6" fill="none"/><path d="M676.6 492.3 H690.5" stroke="#9e9e9e" stroke-width="2.2" fill="none"/><path d="M807 481.6 H828 M811.6 482 V504.8 H826 V482 M816.6 485.5 V501.5 M821 485.5 V501.5 M816 481 V478.4 Q816 476.2 818.2 476.2 H822 Q824 476.2 824 478.4 V481" fill="none" stroke="#9c9c9c" stroke-width="2"/><path d="M824.5 510.5 H832.5 M825.5 510.5 V518.5 H831.5 V510.5 M827.5 512 V517 M829.5 512 V517" fill="none" stroke="#8a8a8a" stroke-width="1"/></g><circle cx="744.6" cy="490" r="81.7" fill="none" stroke="#fb0007" stroke-width="4.2"/></svg>
</body></html>
